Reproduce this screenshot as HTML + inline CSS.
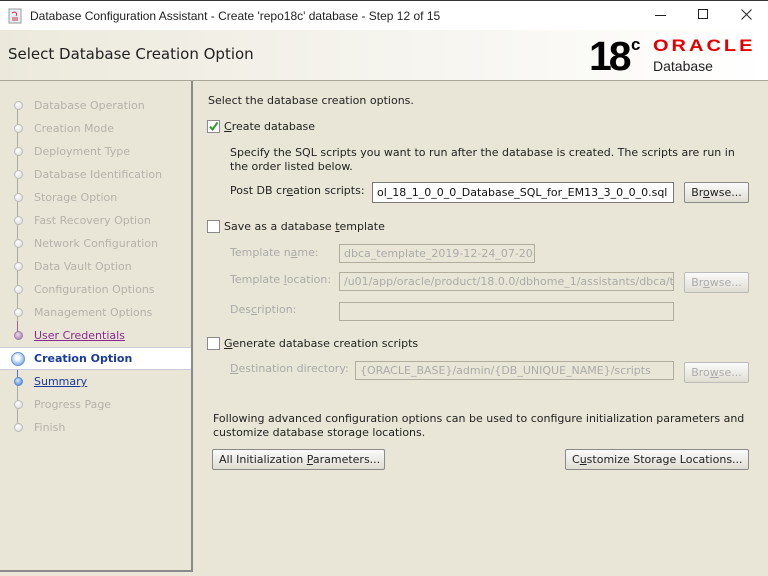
<!DOCTYPE html>
<html><head><style>
*{margin:0;padding:0;box-sizing:border-box}
body{width:768px;height:576px;overflow:hidden;background:#eae6d7;font-family:"DejaVu Sans","Liberation Sans",sans-serif;font-size:11px;color:#222;position:relative}
.a{position:absolute;white-space:nowrap}
.title{left:0;top:0;width:768px;height:30px;background:#fff;border-top:1px solid #333}
.hdr{left:0;top:30px;width:768px;height:51px;background:linear-gradient(90deg,#ece9dc,#f7f6f1 60%,#fff);border-bottom:1px solid #a8a698}
.side{left:-1px;top:81px;width:194px;height:491px;border-right:2px solid #8a8a8a;border-bottom:2px solid #8a8a8a}
.it{left:34px;color:#b4b2aa;font-size:11px}
.dot{position:absolute;left:14px;width:9px;height:9px;border-radius:50%;background:radial-gradient(circle at 40% 35%,#fff,#d8d8d8);border:1px solid #bbb}
.cb{width:13px;height:13px;border:1px solid #8a8a8a;background:#fff}
.tf{border:1px solid #b0ad9f;background:#eae6d7;color:#aaa;height:19px;padding:2px 4px;overflow:hidden;font-size:11px}
.btn{border:1px solid #8a8a8a;border-radius:2px;background:linear-gradient(#fafafa,#e0ddd2);height:21px;padding:3px 6px;font-size:11px;text-align:center}
.dis{color:#aaa;border-color:#bbb}
.lbl{color:#aaa}
</style></head><body>
<div class="a title">
 <svg class="a" style="left:8px;top:7px" width="14" height="16"><rect x="1" y="1" width="12" height="14" fill="#e8eef8" stroke="#999"/><path d="M4 5c3-2 6 0 4 3M4 10h6M4 12h6" stroke="#c33" fill="none"/></svg>
 <div class="a" style="left:30px;top:8px;font-family:'Liberation Sans',sans-serif;font-size:12px;color:#222">Database Configuration Assistant - Create 'repo18c' database - Step 12 of 15</div>
 <div class="a" style="left:655px;top:14px;width:11px;height:1px;background:#222"></div>
 <div class="a" style="left:698px;top:8px;width:10px;height:10px;border:1px solid #222"></div>
 <svg class="a" style="left:741px;top:8px" width="11" height="11"><path d="M0.5 0.5l10 10M10.5 0.5l-10 10" stroke="#222" stroke-width="1"/></svg>
</div>
<div class="a hdr">
 <div class="a" style="left:8px;top:15px;font-size:15px;color:#222">Select Database Creation Option</div>
 <div class="a" style="left:589px;top:4px;font-family:'Liberation Sans',sans-serif;font-weight:bold;font-size:41px;letter-spacing:-3px;color:#000;line-height:44px">18</div>
 <div class="a" style="left:631px;top:5px;font-family:'Liberation Sans',sans-serif;font-weight:bold;font-size:17px;color:#000">c</div>
 <div class="a" style="left:653px;top:5px;font-family:'Liberation Sans',sans-serif;font-weight:bold;font-size:20px;color:#e20000;letter-spacing:3px;transform:scaleY(0.85)">ORACLE</div>
 <div class="a" style="left:653px;top:28px;font-family:'Liberation Sans',sans-serif;font-size:14px;color:#222">Database</div>
</div>
<div class="a side">
 <div class="a" style="left:18px;top:22px;width:1px;height:135px;background:#aaa"></div>
 <div class="a" style="left:18px;top:157px;width:1px;height:96px;background:#aaa"></div>
 <div class="a" style="left:18px;top:240px;width:1px;height:15px;background:#a060a0"></div>
 <div class="a" style="left:18px;top:280px;width:1px;height:23px;background:#4a7ad0"></div>
 <div class="a" style="left:18px;top:303px;width:1px;height:46px;background:#aaa"></div>
 <div class="a" style="left:0;top:266px;width:192px;height:23px;background:#fff;border-top:1px solid #c8ccd8;border-bottom:1px solid #c8ccd8"></div>
</div>
<div class="dot" style="top:101px"></div><div class="a it" style="top:99px">Database Operation</div>
<div class="dot" style="top:124px"></div><div class="a it" style="top:122px">Creation Mode</div>
<div class="dot" style="top:147px"></div><div class="a it" style="top:145px">Deployment Type</div>
<div class="dot" style="top:170px"></div><div class="a it" style="top:168px">Database Identification</div>
<div class="dot" style="top:193px"></div><div class="a it" style="top:191px">Storage Option</div>
<div class="dot" style="top:216px"></div><div class="a it" style="top:214px">Fast Recovery Option</div>
<div class="dot" style="top:239px"></div><div class="a it" style="top:237px">Network Configuration</div>
<div class="dot" style="top:262px"></div><div class="a it" style="top:260px">Data Vault Option</div>
<div class="dot" style="top:285px"></div><div class="a it" style="top:283px">Configuration Options</div>
<div class="dot" style="top:308px"></div><div class="a it" style="top:306px">Management Options</div>
<div class="dot" style="top:331px;background:radial-gradient(circle at 40% 35%,#f0d8f0,#a070a8);border-color:#a080a8"></div><div class="a it" style="top:329px;color:#8a2a90;text-decoration:underline">User Credentials</div>
<div class="dot" style="top:352px;left:11px;width:14px;height:14px;background:radial-gradient(circle at 45% 40%,#fff 20%,#4a88d8);border-color:#6a98d8"></div><div class="a it" style="top:352px;color:#1a3a9a;font-weight:bold">Creation Option</div>
<div class="dot" style="top:377px;background:radial-gradient(circle at 40% 35%,#d8e8ff,#3a78d0);border-color:#5a88d0"></div><div class="a it" style="top:375px;color:#1a3a9a;text-decoration:underline">Summary</div>
<div class="dot" style="top:400px"></div><div class="a it" style="top:398px">Progress Page</div>
<div class="dot" style="top:423px"></div><div class="a it" style="top:421px">Finish</div>

<div class="a" style="left:208px;top:94px">Select the database creation options.</div>
<div class="a cb" style="left:207px;top:120px"><svg width="11" height="11" style="position:absolute;left:0;top:0"><path d="M2 5.5l2.5 3 5-7" stroke="#2a9a2a" stroke-width="2" fill="none"/></svg></div>
<div class="a" style="left:224px;top:120px"><u>C</u>reate database</div>
<div class="a" style="left:230px;top:146px;line-height:14px">Specify the SQL scripts you want to run after the database is created. The scripts are run in<br>the order listed below.</div>
<div class="a" style="left:230px;top:184px">Post DB cr<u>e</u>ation scripts:</div>
<div class="a tf" style="left:372px;top:182px;width:302px;height:21px;background:#fff;border-color:#7a7a7a;color:#111;padding:3px 0 0 4px">ol_18_1_0_0_0_Database_SQL_for_EM13_3_0_0_0.sql</div>
<div class="a btn" style="left:684px;top:182px;width:65px">Br<u>o</u>wse...</div>
<div class="a cb" style="left:207px;top:220px"></div>
<div class="a" style="left:224px;top:220px">Save as a database <u>t</u>emplate</div>
<div class="a lbl" style="left:230px;top:246px">Template n<u>a</u>me:</div>
<div class="a tf" style="left:339px;top:244px;width:196px">dbca_template_2019-12-24_07-20-0</div>
<div class="a lbl" style="left:230px;top:273px">Template <u>l</u>ocation:</div>
<div class="a tf" style="left:339px;top:272px;width:335px">/u01/app/oracle/product/18.0.0/dbhome_1/assistants/dbca/te</div>
<div class="a btn dis" style="left:684px;top:272px;width:65px">Br<u>o</u>wse...</div>
<div class="a lbl" style="left:230px;top:303px">Des<u>c</u>ription:</div>
<div class="a tf" style="left:339px;top:302px;width:335px"></div>
<div class="a cb" style="left:207px;top:337px"></div>
<div class="a" style="left:224px;top:337px"><u>G</u>enerate database creation scripts</div>
<div class="a lbl" style="left:230px;top:362px"><u>D</u>estination directory:</div>
<div class="a tf" style="left:355px;top:361px;width:319px">{ORACLE_BASE}/admin/{DB_UNIQUE_NAME}/scripts</div>
<div class="a btn dis" style="left:684px;top:362px;width:65px">Bro<u>w</u>se...</div>
<div class="a" style="left:213px;top:412px;line-height:14px">Following advanced configuration options can be used to configure initialization parameters and<br>customize database storage locations.</div>
<div class="a btn" style="left:212px;top:449px;width:173px">All Initialization <u>P</u>arameters...</div>
<div class="a btn" style="left:565px;top:449px;width:184px">C<u>u</u>stomize Storage Locations...</div>
</body></html>
